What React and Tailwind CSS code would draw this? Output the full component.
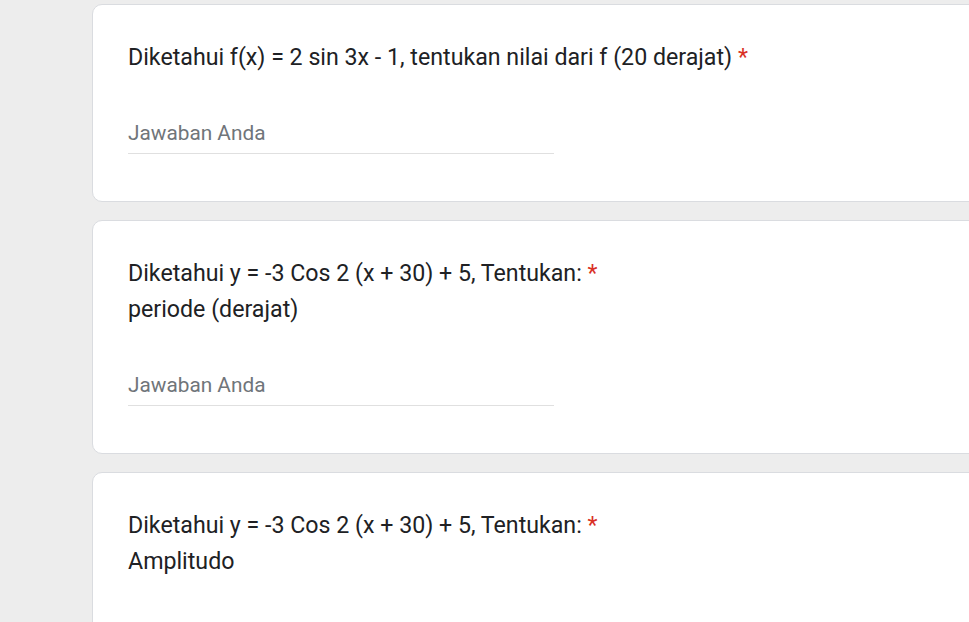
const questions = [
  { id: 1, lines: ['Diketahui f(x) = 2 sin 3x - 1, tentukan nilai dari f (20 derajat)'], answer: true },
  { id: 2, lines: ['Diketahui y = -3 Cos 2 (x + 30) + 5, Tentukan:', 'periode (derajat)'], answer: true },
  { id: 3, lines: ['Diketahui y = -3 Cos 2 (x + 30) + 5, Tentukan:', 'Amplitudo'], answer: true },
];

const QuestionCard = ({ q }) => (
  <div className="w-[960px] shrink-0 bg-white border border-[#dadce0] rounded-[10px] px-[35px] pt-[34px] pb-[47px]">
    <div className="text-[23.2px] leading-[36px] text-[#202124]">
      {q.lines.map((line, i) => (
        <div key={i}>
          {line}
          {i === 0 && <span className="text-[#d93025]"> *</span>}
        </div>
      ))}
    </div>
    {q.answer && (
      <div className="mt-[46px] w-[426px] border-b border-[#e0e0e0] pb-[8px]">
        <div className="text-[20.8px] leading-[24px] text-[#70757a]">Jawaban Anda</div>
      </div>
    )}
  </div>
);

export default function App() {
  return (
    <div className="w-[969px] h-[622px] overflow-hidden bg-[#ededed] pl-[92px] pt-[4px]" style={{ fontFamily: "Roboto, 'Noto Sans', sans-serif" }}>
      <div className="flex flex-col gap-[18px]">
        {questions.map(q => <QuestionCard key={q.id} q={q} />)}
      </div>
    </div>
  );
}
